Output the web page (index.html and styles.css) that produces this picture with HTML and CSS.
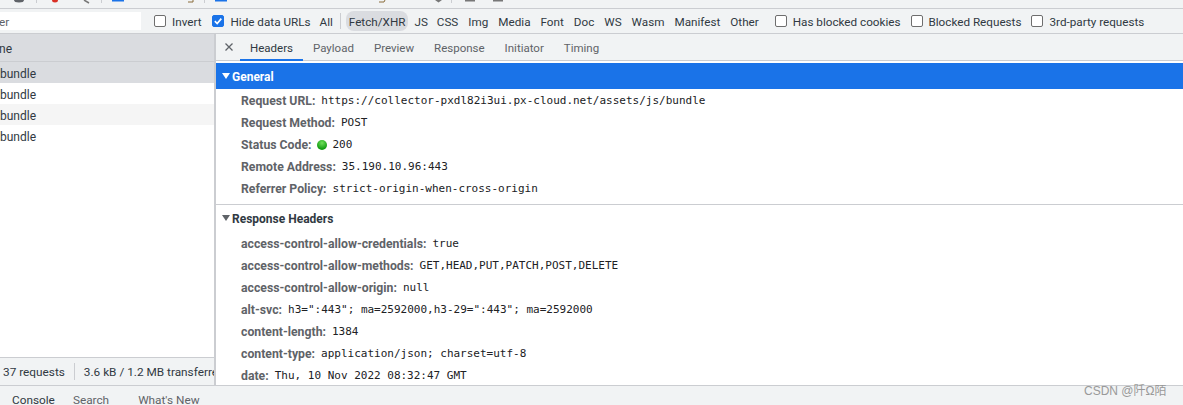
FILE: index.html
```html
<!DOCTYPE html>
<html lang="en">
<head>
<meta charset="utf-8">
<title>Network</title>
<link rel="stylesheet" href="styles.css">
</head>
<body>
<div class="app">
  <div class="topstrip">
    <svg class="topicons" width="620" height="8" viewBox="0 0 620 8">
      <path d="M14 0 h10 a5 2.5 0 0 1 -10 0" fill="#5f6368"/>
      <rect x="36" y="0" width="1" height="3" fill="#cbcdd1"/>
      <path d="M52 0 h6 a3 2.5 0 0 1 -6 0" fill="#d93025"/>
      <path d="M84 0 l5 3" stroke="#777" stroke-width="1.5" fill="none"/>
      <rect x="101" y="0" width="1" height="3" fill="#cbcdd1"/>
      <rect x="112" y="0" width="12" height="1.5" fill="#1a73e8"/>
      <path d="M188 2 h5 v-2" stroke="#8a6d3b" stroke-width="1" fill="none"/>
      <rect x="204" y="0" width="1" height="3" fill="#cbcdd1"/>
      <rect x="215" y="0" width="12" height="1.5" fill="#1a73e8"/>
      <path d="M379 2 h5 l1 -2" stroke="#8a6d3b" stroke-width="1" fill="none"/>
      <path d="M435 0 h7 l-3.500 2.500 z" fill="#777"/>
      <rect x="451" y="0" width="1" height="3" fill="#cbcdd1"/>
      <rect x="465" y="0" width="10" height="1.500" fill="#777"/>
      <rect x="493" y="0" width="10" height="1.500" fill="#777"/>
    </svg>
  </div>
  <div class="filterbar">
    <div class="filterinput">er</div>
    <label class="check"><span class="box"></span><span class="lbl">Invert</span></label>
    <label class="check check-hide"><span class="box on"><svg width="12" height="12" viewBox="0 0 12 12"><path d="M2.200 6.200 L5 9 L10 3.200" fill="none" stroke="#fff" stroke-width="2"/></svg></span><span class="lbl">Hide data URLs</span></label>
    <span class="type">All</span>
    <span class="sep"></span>
    <span class="type active">Fetch/XHR</span>
    <span class="type type-js">JS</span>
    <span class="type">CSS</span>
    <span class="type">Img</span>
    <span class="type">Media</span>
    <span class="type">Font</span>
    <span class="type">Doc</span>
    <span class="type">WS</span>
    <span class="type">Wasm</span>
    <span class="type">Manifest</span>
    <span class="type">Other</span>
    <label class="check check-cookies"><span class="box"></span><span class="lbl">Has blocked cookies</span></label>
    <label class="check"><span class="box"></span><span class="lbl">Blocked Requests</span></label>
    <label class="check check-third"><span class="box"></span><span class="lbl">3rd-party requests</span></label>
  </div>
  <div class="main">
    <div class="list">
      <div class="listhead">ne</div>
      <div class="rows">
        <div class="row sel">bundle</div>
        <div class="row">bundle</div>
        <div class="row alt">bundle</div>
        <div class="row">bundle</div>
      </div>
      <div class="summary"><span class="count">37 requests</span><span class="transfer">3.6 kB / 1.2 MB transferred</span></div>
    </div>
    <div class="detail">
      <div class="tabs">
        <span class="close"><svg width="8" height="8" viewBox="0 0 8 8"><path d="M0.500 0.500 L7.500 7.500 M7.500 0.500 L0.500 7.500" stroke="#5f6368" stroke-width="1.300" fill="none"/></svg></span>
        <span class="tab current">Headers</span>
        <span class="tab">Payload</span>
        <span class="tab">Preview</span>
        <span class="tab">Response</span>
        <span class="tab">Initiator</span>
        <span class="tab">Timing</span>
      </div>
      <div class="sections">
        <div class="sechead general"><span class="tri"></span>General</div>
        <div class="kvs first">
          <div class="kv"><b>Request URL:</b><code>https://collector-pxdl82i3ui.px-cloud.net/assets/js/bundle</code></div>
          <div class="kv"><b>Request Method:</b><code>POST</code></div>
          <div class="kv"><b>Status Code:</b><span class="dot"></span><code class="status">200</code></div>
          <div class="kv"><b>Remote Address:</b><code>35.190.10.96:443</code></div>
          <div class="kv"><b>Referrer Policy:</b><code>strict-origin-when-cross-origin</code></div>
        </div>
        <div class="sechead response"><span class="tri dark"></span>Response Headers</div>
        <div class="kvs">
          <div class="kv"><b>access-control-allow-credentials:</b><code>true</code></div>
          <div class="kv"><b>access-control-allow-methods:</b><code>GET,HEAD,PUT,PATCH,POST,DELETE</code></div>
          <div class="kv"><b>access-control-allow-origin:</b><code>null</code></div>
          <div class="kv"><b>alt-svc:</b><code>h3=":443"; ma=2592000,h3-29=":443"; ma=2592000</code></div>
          <div class="kv"><b>content-length:</b><code>1384</code></div>
          <div class="kv"><b>content-type:</b><code>application/json; charset=utf-8</code></div>
          <div class="kv"><b>date:</b><code>Thu, 10 Nov 2022 08:32:47 GMT</code></div>
        </div>
      </div>
    </div>
  </div>
  <div class="drawer">
    <span class="drawertab console">Console</span>
    <span class="drawertab search">Search</span>
    <span class="drawertab">What's New</span>
    <span class="watermark">CSDN @阡Ω陌</span>
  </div>
</div>
</body>
</html>
```
FILE: styles.css
```css
* { box-sizing: border-box; }
html, body { margin: 0; padding: 0; }
body { width: 1183px; height: 405px; overflow: hidden; background: #f1f3f4; font-family: Roboto, "Liberation Sans", "Noto Sans CJK SC", sans-serif; font-size: 12px; color: #303942; }
.app { display: flex; flex-direction: column; height: 405px; }
.topstrip { height: 9px; border-bottom: 1px solid #cbcdd1; flex: none; }
.topicons { display: block; }
.filterbar { height: 25px; flex: none; display: flex; align-items: center; border-bottom: 1px solid #cbcdd1; white-space: nowrap; font-size: 11.7px; }
.filterinput { width: 141px; height: 18px; background: #fff; line-height: 20px; margin-right: 13px; text-indent: -1px; color: #5f6368; }
.check { display: flex; align-items: center; margin-right: 10px; }
.check-hide { margin-right: 4px; }
.check-third { margin-right: 0; }
.box { width: 12px; height: 12px; border: 1px solid #6e6e6e; border-radius: 2px; background: #fff; margin-right: 6px; display: flex; align-items: center; justify-content: center; flex: none; }
.box.on { background: #1a73e8; border-color: #1a73e8; margin-right: 7px; }
.lbl { margin-top: 2px; }
.check-cookies { margin-left: 11px; }
.type { padding: 1px 5px 0; line-height: 20px; height: 20px; }
.type-js { margin-right: -1px; }
.sep { width: 1px; height: 16px; background: #cbcdd1; margin: 0 5px 0 2px; }
.type.active { background: #dadce0; border-radius: 8px; padding: 1px 3px 0; margin-right: 1px; }
.main { flex: 1; display: flex; min-height: 0; }
.list { width: 216px; flex: none; display: flex; flex-direction: column; border-right: 2px solid #cbcdd1; background: #fff; }
.listhead { height: 28px; background: #dadce0; border-bottom: 1px solid #cbcdd1; line-height: 30px; text-indent: -1px; }
.rows { flex: 1; }
.row { height: 21px; line-height: 21px; padding-top: 2px; }
.row.sel { background: #dadce0; }
.row.alt { background: #f5f5f5; }
.summary { height: 28px; background: #f1f3f4; border-top: 1px solid #cbcdd1; display: flex; align-items: center; overflow: hidden; white-space: nowrap; font-size: 11.8px; }
.count { padding: 1px 9px 0 3px; border-right: 1px solid #cbcdd1; line-height: 16px; }
.transfer { padding: 1px 0 0 9px; }
.detail { flex: 1; display: flex; flex-direction: column; min-width: 0; background: #fff; }
.tabs { height: 27px; flex: none; background: #f1f3f4; border-bottom: 1px solid #cbcdd1; display: flex; align-items: flex-start; color: #5f6368; font-size: 11.5px; }
.close { width: 24px; height: 25px; display: flex; align-items: center; justify-content: center; padding-left: 2px; }
.tab { height: 27px; line-height: 28px; padding: 0 10px; }
.tab.current { color: #303942; border-bottom: 2px solid #1a73e8; }
.sections { flex: 1; padding-top: 2px; overflow: hidden; }
.sechead { font-weight: 700; height: 26px; line-height: 28px; padding-left: 16px; position: relative; }
.general { background: #1a73e8; color: #fff; }
.response { height: 28px; line-height: 29px; border-top: 1px solid #cbcdd1; margin-top: 4px; color: #303942; }
.tri { position: absolute; left: 6px; top: 10px; width: 0; height: 0; border-left: 4px solid transparent; border-right: 4px solid transparent; border-top: 6px solid #fff; }
.tri.dark { border-top-color: #5f6368; }
.kvs { padding-top: 1px; }
.kv { height: 22px; line-height: 22px; padding-left: 25px; display: flex; align-items: center; white-space: nowrap; }
.kv b { font-weight: 700; font-size: 12.25px; color: #5f6368; margin-right: 6px; }
code { font-family: "DejaVu Sans Mono", "Liberation Mono", monospace; font-size: 11px; color: #202124; }
.dot { width: 10px; height: 10px; border-radius: 50%; background: radial-gradient(circle at 50% 30%, #6fe05a, #129c12 70%); margin-right: 5px; }
.drawer { height: 20px; flex: none; border-top: 1px solid #cbcdd1; display: flex; align-items: flex-end; position: relative; line-height: 14px; font-size: 11.8px; }
.drawertab { color: #5f6368; margin-bottom: -2px; }
.console { margin-left: 12px; margin-right: 18px; color: #303942; }
.search { margin-right: 29px; }
.watermark { position: absolute; left: 1084px; top: -3px; font-family: "Liberation Sans", "Noto Sans CJK SC", sans-serif; font-size: 12px; color: #999; line-height: 16px; }
```
